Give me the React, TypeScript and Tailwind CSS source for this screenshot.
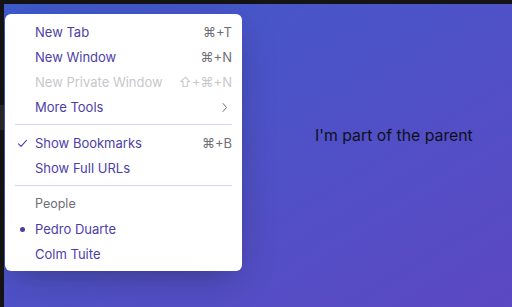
import { ReactNode } from 'react';

type ItemProps = {
  children: ReactNode;
  shortcut?: string;
  disabled?: boolean;
  indicator?: ReactNode;
  right?: ReactNode;
};

const MenuItem = ({ children, shortcut, disabled, indicator, right }: ItemProps) => (
  <div
    className={`relative flex h-[25px] items-center whitespace-nowrap rounded-[3px] pl-[25px] pr-[5px] pt-px text-[13px] leading-none ${
      disabled ? 'text-[#c8c7cb]' : 'text-[#4c3ea9]'
    }`}
  >
    {indicator && (
      <span className="absolute left-0 flex h-full w-[25px] items-center justify-center">
        {indicator}
      </span>
    )}
    <span>{children}</span>
    {shortcut && (
      <span
        className={`ml-auto pl-2 ${disabled ? 'text-[#c8c7cb]' : 'text-[#6f6e77]'}`}
      >
        {shortcut}
      </span>
    )}
    {right && <span className="ml-auto pl-2 text-[#6f6e77]">{right}</span>}
  </div>
);

const Separator = () => <div className="m-[5px] h-px bg-[#d7cff9]" />;

const ChevronRight = () => (
  <svg width="15" height="15" viewBox="0 0 15 15" fill="none">
    <path
      d="M6 3.5L9.5 7.5L6 11.5"
      stroke="currentColor"
      strokeWidth="1"
      strokeLinecap="round"
      strokeLinejoin="round"
    />
  </svg>
);

const Check = () => (
  <svg width="15" height="15" viewBox="0 0 15 15" fill="none">
    <path
      d="M3.5 7.8L6 10.3L11.5 4.3"
      stroke="currentColor"
      strokeWidth="1.1"
      strokeLinecap="round"
      strokeLinejoin="round"
    />
  </svg>
);

const ContextMenu = () => (
  <div className="absolute left-px top-[10px] w-[237px] rounded-[6px] bg-white p-[5px] shadow-[0_10px_38px_-10px_rgba(22,23,24,0.35),0_10px_20px_-15px_rgba(22,23,24,0.2)]">
    <MenuItem shortcut="⌘+T">New Tab</MenuItem>
    <MenuItem shortcut="⌘+N">New Window</MenuItem>
    <MenuItem shortcut="⇧+⌘+N" disabled>
      New Private Window
    </MenuItem>
    <MenuItem right={<ChevronRight />}>More Tools</MenuItem>
    <Separator />
    <MenuItem shortcut="⌘+B" indicator={<Check />}>
      Show Bookmarks
    </MenuItem>
    <MenuItem>Show Full URLs</MenuItem>
    <Separator />
    <div className="flex h-[25px] items-center pl-[25px] pt-px text-[12.5px] leading-none text-[#6f6e77]">
      People
    </div>
    <MenuItem indicator={<span className="h-[5px] w-[5px] rounded-full bg-[#4c3ea9]" />}>
      Pedro Duarte
    </MenuItem>
    <MenuItem>Colm Tuite</MenuItem>
  </div>
);

const App = () => {
  return (
    <div
      className="flex h-[307px] w-[512px] flex-col overflow-hidden bg-[#141414]"
      style={{ fontFamily: 'Inter, "Noto Sans", sans-serif' }}
    >
      <div className="h-1 shrink-0" />
      <div className="flex flex-1">
        <div className="flex w-1 shrink-0 flex-col">
          <div className="h-[101px]" />
          <div className="h-[25px] bg-[#2a2a2a]" />
        </div>
        <div className="relative flex-1 bg-gradient-to-br from-[#3e5acc] to-[#5b48c2]">
          <div className="pl-[311px] pt-[120px] text-[15.8px] text-[#0f0f1c]">
            I'm part of the parent
          </div>
          <ContextMenu />
        </div>
      </div>
    </div>
  );
};

export default App;
